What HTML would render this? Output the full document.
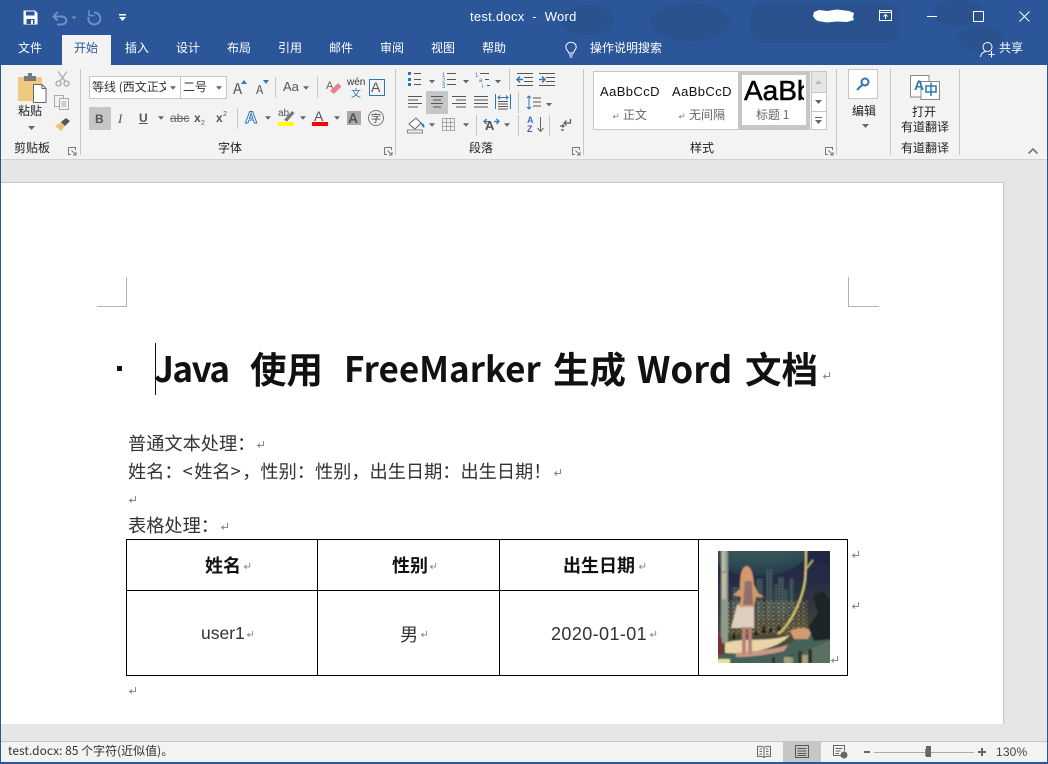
<!DOCTYPE html>
<html lang="zh-CN"><head><meta charset="utf-8"><style>
html,body{margin:0;padding:0;width:1048px;height:764px;overflow:hidden;background:#e6e6e6;font-family:"Liberation Sans","Noto Sans CJK SC",sans-serif}
#a{position:relative;width:1048px;height:764px;overflow:hidden}
.b{position:absolute}
.t{position:absolute;white-space:nowrap;line-height:1;font-family:"Noto Sans CJK SC","Liberation Sans",sans-serif}
.tab{color:#fff;font-size:12px;top:42px}
.r{color:#333;font-size:12px}
.d{color:#333;font-size:18.2px;font-weight:400}
.h{font-size:36.5px;line-height:42px;top:347px;font-weight:700;color:#111}
.l{font-size:35px;line-height:42px;top:347px;font-weight:700;color:#111}
.th{font-size:18px;top:556px;font-weight:700;color:#111}
.sep{position:absolute;width:1px;background:#c6c6c6}
svg{position:absolute;overflow:visible}
.ret{width:9px;height:9px}
</style></head><body><div id="a">
<svg width="0" height="0"><defs>
<symbol id="ret" viewBox="0 0 9 9"><path d="M7.500 1V5.500H2M4 3.500L1.500 5.500L4 7.500" fill="none" stroke="#888" stroke-width="1"/></symbol>
<symbol id="caret" viewBox="0 0 7 4"><path d="M0 0H7L3.500 4Z" fill="#666"/></symbol>
<symbol id="lnch" viewBox="0 0 9 9"><path d="M.5 .5H7.500V3M.5 .5V7.500H3" fill="none" stroke="#777"/><path d="M3.500 3.500L8 8M8 5V8H5" fill="none" stroke="#777"/></symbol>
</defs></svg>

<!-- title + tabs -->
<div class="b" style="left:0;top:0;width:1048px;height:65px;background:#2b579a"></div>
<svg style="left:0;top:0" width="1048" height="52"><g fill="#29528f"><ellipse cx="587" cy="20" rx="26" ry="15"/><rect x="750" y="3" width="150" height="40" rx="14"/><ellipse cx="958" cy="13" rx="26" ry="13"/><ellipse cx="980" cy="39" rx="22" ry="13"/><ellipse cx="690" cy="22" rx="40" ry="19"/></g></svg>
<!-- save -->
<svg style="left:23px;top:10px" width="15" height="15"><path d="M.5 .5H12L14.500 3V14.500H.5Z" fill="#fff"/><rect x="3" y="1.500" width="8.500" height="4" fill="#2b579a"/><rect x="3.500" y="9" width="8" height="5" fill="#2b579a"/><rect x="8" y="10" width="2" height="4" fill="#fff"/></svg>
<!-- undo/redo -->
<svg style="left:52px;top:10px" width="62" height="16" fill="none" stroke="#6f8fbf" stroke-width="2"><path d="M2 6.500H9.500C16 6.500 16 14.500 9.500 14.500H5M5.500 2L1.500 6.500L5.500 10.500"/><path d="M19.500 6.500H24.500L22 9.500Z" fill="#6f8fbf" stroke="none"/><path d="M42 2.500A6 6 0 1 1 36.500 7"/><path d="M37 0V5.500H42.500" stroke-width="1.500"/></svg>
<svg style="left:119px;top:14px" width="7" height="9"><rect x="0" y="0" width="7" height="1.500" fill="#fff"/><path d="M0 3H7L3.500 7Z" fill="#fff"/></svg>
<div class="t" style="left:470px;top:10px;color:#fff;font-size:13px;font-family:'Liberation Sans','Noto Sans CJK SC',sans-serif;letter-spacing:.28px;white-space:pre">test.docx  -  Word</div>
<!-- white blob -->
<svg style="left:813px;top:9px" width="41" height="14"><path d="M1 3L6 1L14 2L24 .5L36 2L41 4L40 8L41 11L34 13L24 12.500L14 13.500L5 12L2 10L0 7Z" fill="#fff"/></svg>
<svg style="left:879px;top:10px" width="13" height="11" fill="none" stroke="#fff"><rect x=".5" y=".5" width="12" height="10"/><path d="M.5 2.500H12.500"/><path d="M6.500 9V4.500M4.500 6.500L6.500 4.500L8.500 6.500"/></svg>
<div class="b" style="left:927px;top:16px;width:10px;height:1px;background:#fff"></div>
<div class="b" style="left:973px;top:11px;width:9px;height:9px;border:1px solid #fff"></div>
<svg style="left:1019px;top:11px" width="11" height="11" stroke="#fff"><path d="M.5 .5L10.500 10.500M10.500 .5L.5 10.500"/></svg>

<div class="b" style="left:62px;top:35px;width:49px;height:30px;background:#f3f3f3"></div>
<div class="t tab" style="left:18px">文件</div>
<div class="t tab" style="left:74px;color:#2b579a">开始</div>
<div class="t tab" style="left:125px">插入</div>
<div class="t tab" style="left:176px">设计</div>
<div class="t tab" style="left:227px">布局</div>
<div class="t tab" style="left:278px">引用</div>
<div class="t tab" style="left:329px">邮件</div>
<div class="t tab" style="left:380px">审阅</div>
<div class="t tab" style="left:431px">视图</div>
<div class="t tab" style="left:482px">帮助</div>
<svg style="left:565px;top:42px" width="12" height="17" fill="none" stroke="#fff"><path d="M3.500 11C3.500 8.500 .8 8 .8 5A5.200 4.700 0 0 1 11.200 5C11.200 8 8.500 8.500 8.500 11Z"/><path d="M4 13H8M4.500 15H7.500"/></svg>
<div class="t tab" style="left:590px">操作说明搜索</div>
<svg style="left:980px;top:42px" width="16" height="17" fill="none" stroke="#fff"><circle cx="7.500" cy="5" r="4.500"/><path d="M.5 15C1 11.500 3.500 9.500 6 9.500M11.500 9V15.500M8.500 12.500H14.500"/></svg>
<div class="t tab" style="left:999px">共享</div>

<!-- ribbon -->
<div class="b" style="left:0;top:65px;width:1048px;height:94px;background:#f3f3f3;border-bottom:1px solid #d2d2d2"></div>
<div class="sep" style="left:80px;top:69px;height:86px"></div>
<div class="sep" style="left:395px;top:69px;height:86px"></div>
<div class="sep" style="left:583px;top:69px;height:86px"></div>
<div class="sep" style="left:836px;top:69px;height:86px"></div>
<div class="sep" style="left:890px;top:69px;height:86px"></div>
<div class="sep" style="left:959px;top:69px;height:86px"></div>

<!-- clipboard -->
<svg style="left:18px;top:73px" width="29" height="30"><rect x="0" y="4" width="24" height="24" rx="1" fill="#f0c981"/><rect x="6" y="3" width="12" height="5" fill="#7a7a7a"/><rect x="10" y="0" width="4" height="4" fill="#7a7a7a"/><path d="M15.500 11.500H24L28 15.500V29.500H15.500Z" fill="#fff" stroke="#666"/><path d="M24 11.500V15.500H28" fill="none" stroke="#666"/></svg>
<div class="t r" style="left:18px;top:105px;color:#222">粘贴</div>
<svg style="left:28px;top:126px" width="7" height="4"><use href="#caret" width="7" height="4"/></svg>
<svg style="left:55px;top:71px" width="15" height="16" fill="none" stroke="#aaa" stroke-width="1.300"><path d="M3 .5L10 10M12 .5L5 10"/><circle cx="3.500" cy="12.500" r="2.500"/><circle cx="11.500" cy="12.500" r="2.500"/></svg>
<svg style="left:54px;top:95px" width="16" height="15" fill="#f3f3f3" stroke="#aaa"><rect x=".5" y=".5" width="9" height="11"/><rect x="5.500" y="3.500" width="9" height="11"/><path d="M7.500 7H12.500M7.500 9H12.500M7.500 11H12.500" /></svg>
<svg style="left:54px;top:117px" width="17" height="16"><path d="M1 9L7 14L11 9L7 5Z" fill="#eec27c"/><path d="M7 5L12 1L16 4L11 9Z" fill="#555"/></svg>
<div class="t r" style="left:14px;top:142px;color:#222">剪贴板</div>
<svg style="left:68px;top:147px" width="9" height="9"><use href="#lnch" width="9" height="9"/></svg>

<!-- font -->
<div class="b" style="left:89px;top:76px;width:90px;height:21px;background:#fff;border:1px solid #c6c6c6"></div>
<div class="b" style="left:180px;top:76px;width:45px;height:21px;background:#fff;border:1px solid #c6c6c6"></div>
<div class="t r" style="left:92px;top:81px;width:74px;overflow:hidden;color:#333">等线 (西文正文)</div>
<svg style="left:170px;top:86px" width="6" height="4"><use href="#caret" width="6" height="4"/></svg>
<div class="t r" style="left:183px;top:81px">二号</div>
<svg style="left:216px;top:86px" width="6" height="4"><use href="#caret" width="6" height="4"/></svg>
<div class="t" style="left:233px;top:81px;font-size:15px;color:#555">A</div>
<svg style="left:241px;top:80px" width="6" height="4"><path d="M0 4L3 0L6 4Z" fill="#2f76b5"/></svg>
<div class="t" style="left:256px;top:84px;font-size:12px;color:#555">A</div>
<svg style="left:263px;top:80px" width="6" height="4"><path d="M0 0L3 4L6 0Z" fill="#2f76b5"/></svg>
<div class="sep" style="left:275px;top:77px;height:21px"></div>
<div class="t" style="left:283px;top:80px;font-size:13px;color:#555;font-family:'Liberation Sans'">Aa</div>
<svg style="left:303px;top:86px" width="6" height="4"><use href="#caret" width="6" height="4"/></svg>
<div class="sep" style="left:317px;top:77px;height:21px"></div>
<svg style="left:326px;top:78px" width="16" height="17"><text x="0" y="11" font-size="11" fill="#666" font-family="Liberation Sans">A</text><path d="M4 13L12 5L15.500 8.500L8 16Z" fill="#e8838e"/></svg>
<div class="t" style="left:347px;top:78px;font-size:10px;color:#333;font-family:'Liberation Sans'">wén</div>
<div class="t" style="left:351px;top:88px;font-size:10px;color:#2f76b5">文</div>
<div class="b" style="left:369px;top:79px;width:14px;height:15px;border:1px solid #2f76b5"></div>
<div class="t" style="left:371px;top:80px;font-size:14px;color:#555;font-family:'Liberation Sans'">A</div>

<div class="b" style="left:89px;top:107px;width:22px;height:23px;background:#c6c6c6"></div>
<div class="t" style="left:95px;top:113px;font-size:12px;font-weight:700;color:#555;font-family:'Liberation Sans'">B</div>
<div class="t" style="left:118px;top:112px;font-size:13px;font-style:italic;color:#555;font-family:'Liberation Serif'">I</div>
<div class="t" style="left:139px;top:112px;font-size:12px;color:#555;font-weight:700;font-family:'Liberation Sans';text-decoration:underline">U</div>
<svg style="left:158px;top:116px" width="6" height="4"><use href="#caret" width="6" height="4"/></svg>
<div class="t" style="left:170px;top:112px;font-size:12px;color:#666;font-family:'Liberation Sans';text-decoration:line-through">abc</div>
<div class="t" style="left:194px;top:112px;font-size:12px;font-weight:700;color:#555;font-family:'Liberation Sans'">x</div>
<div class="t" style="left:201px;top:120px;font-size:7px;color:#2f76b5;font-family:'Liberation Sans'">2</div>
<div class="t" style="left:216px;top:112px;font-size:12px;font-weight:700;color:#555;font-family:'Liberation Sans'">x</div>
<div class="t" style="left:223px;top:111px;font-size:7px;color:#555;font-family:'Liberation Sans'">2</div>
<div class="sep" style="left:237px;top:108px;height:21px"></div>
<div class="t" style="left:245px;top:109px;font-size:17px;font-weight:700;color:#fff;-webkit-text-stroke:1px #2f76b5;font-family:'Liberation Sans'">A</div>
<svg style="left:265px;top:116px" width="6" height="4"><use href="#caret" width="6" height="4"/></svg>
<div class="t" style="left:278px;top:109px;font-size:10px;color:#555;font-family:'Liberation Sans'">ab</div>
<svg style="left:283px;top:110px" width="12" height="12"><path d="M1 10L9 1L11.500 3L4 11.500Z" fill="#777"/></svg>
<div class="b" style="left:278px;top:122px;width:16px;height:4px;background:#ff0"></div>
<svg style="left:300px;top:116px" width="6" height="4"><use href="#caret" width="6" height="4"/></svg>
<div class="t" style="left:314px;top:109px;font-size:14px;color:#555;font-family:'Liberation Sans'">A</div>
<div class="b" style="left:312px;top:122px;width:16px;height:4px;background:#f00"></div>
<svg style="left:334px;top:116px" width="6" height="4"><use href="#caret" width="6" height="4"/></svg>
<div class="b" style="left:347px;top:111px;width:14px;height:14px;background:#a9a9a9"></div>
<div class="t" style="left:348px;top:111px;font-size:14px;font-weight:700;color:#555;font-family:'Liberation Sans'">A</div>
<div class="b" style="left:368px;top:110px;width:14px;height:14px;border:1px solid #777;border-radius:50%"></div>
<div class="t" style="left:371px;top:113px;font-size:10px;color:#444">字</div>
<div class="t r" style="left:218px;top:142px;color:#222">字体</div>
<svg style="left:384px;top:147px" width="9" height="9"><use href="#lnch" width="9" height="9"/></svg>

<!-- paragraph -->
<svg style="left:408px;top:71px" width="155" height="18" fill="none" stroke="#555">
<path d="M6 2.500H13M6 8.500H13M6 13.500H13"/><g fill="#2f76b5" stroke="none"><rect x="0" y="1" width="3" height="3"/><rect x="0" y="7" width="3" height="3"/><rect x="0" y="12" width="3" height="3"/></g>
<path d="M21 9H27L24 12.500Z" fill="#666" stroke="none"/>
<path d="M39 2.500H48M39 8.500H48M39 13.500H48"/><g font-size="6" fill="#2f76b5" stroke="none" font-family="Liberation Sans"><text x="34" y="6">1</text><text x="34" y="11.500">2</text><text x="34" y="17">3</text></g>
<path d="M55 9H61L58 12.500Z" fill="#666" stroke="none"/>
<path d="M72 2.500H81M77 8.500H81M79 14.500H82"/><g font-size="6" fill="#2f76b5" stroke="none" font-family="Liberation Sans"><text x="67" y="6">1</text><text x="71" y="11">a</text><text x="74" y="17">i</text></g>
<path d="M87 9H93L90 12.500Z" fill="#666" stroke="none"/>
<path d="M109 2.500H125M116 6.500H125M116 10.500H125M109 14.500H125"/><path d="M115 8.500H109M112 5.500L109 8.500L112 11.500" stroke="#2f76b5" stroke-width="1.500"/>
<path d="M131 2.500H147M138 6.500H147M138 10.500H147M131 14.500H147"/><path d="M131 8.500H137M134 5.500L137 8.500L134 11.500" stroke="#2f76b5" stroke-width="1.500"/>
</svg>
<div class="sep" style="left:509px;top:69px;height:21px"></div>
<div class="b" style="left:426px;top:91px;width:22px;height:23px;background:#c6c6c6"></div>
<svg style="left:408px;top:95px" width="150" height="16" fill="none" stroke="#555">
<path d="M0 1.500H14M0 5H10M0 8.500H14M0 12H10"/><path d="M23 1.500H35M25 5H33M23 8.500H35M25 12H33"/><path d="M44 1.500H58M48 5H58M44 8.500H58M48 12H58"/><path d="M66 1.500H80M66 5H80M66 8.500H80M66 12H80"/>
<path d="M87.500 -1V14M102.500 -1V14" stroke="#2f76b5"/><path d="M90 6.500H100M90 9H100M90 11.500H100M90 14H100"/><path d="M90 2.500H100M92 .5L90 2.500L92 4.500M98 .5L100 2.500L98 4.500" stroke="#2f76b5"/>
<path d="M125 3H133M125 7H133M125 11H133"/><path d="M121 1V14M119 3L121 1L123 3M119 12L121 14L123 12" stroke="#2f76b5"/>
<path d="M138 8H144L141 11.500Z" fill="#666" stroke="none"/>
</svg>
<div class="sep" style="left:518px;top:92px;height:21px"></div>
<svg style="left:407px;top:116px" width="20" height="18"><path d="M2 8L9 2L14 7L8 13Z" fill="#fff" stroke="#666"/><path d="M14 7C17 7 18 10 17 12C15 10 14 9 14 7Z" fill="#2f76b5"/><rect x=".5" y="14" width="15" height="3" fill="#f3f3f3" stroke="#888"/></svg>
<svg style="left:429px;top:123px" width="6" height="4"><use href="#caret" width="6" height="4"/></svg>
<svg style="left:442px;top:118px" width="13" height="13" fill="none" stroke="#666" stroke-dasharray="1 1"><rect x=".5" y=".5" width="12" height="12"/><path d="M.5 4.500H12.500M.5 8.500H12.500M4.500 .5V12.500M8.500 .5V12.500"/></svg>
<svg style="left:463px;top:123px" width="6" height="4"><use href="#caret" width="6" height="4"/></svg>
<div class="sep" style="left:476px;top:115px;height:21px"></div>
<div class="t" style="left:485px;top:119px;font-size:13px;font-weight:700;color:#555;font-family:'Liberation Sans'">A</div>
<svg style="left:484px;top:118px" width="16" height="7" fill="none" stroke="#2f76b5" stroke-width="1.300"><path d="M0 3.500H5M2.500 1L0 3.500L2.500 6M15 3.500H10M12.500 1L15 3.500L12.500 6"/></svg>
<svg style="left:504px;top:123px" width="6" height="4"><use href="#caret" width="6" height="4"/></svg>
<div class="sep" style="left:518px;top:115px;height:21px"></div>
<div class="t" style="left:527px;top:116px;font-size:9px;font-weight:700;color:#2f76b5;font-family:'Liberation Sans'">A</div>
<div class="t" style="left:527px;top:125px;font-size:9px;font-weight:700;color:#7b4aa6;font-family:'Liberation Sans'">Z</div>
<svg style="left:537px;top:117px" width="7" height="16" fill="none" stroke="#666"><path d="M3.500 0V14M.5 11L3.500 14.500L6.500 11"/></svg>
<div class="sep" style="left:549px;top:115px;height:21px"></div>
<svg style="left:559px;top:118px" width="13" height="13" fill="none" stroke="#555" stroke-width="1.200"><path d="M11.500 1V5H5M7.500 2.500L5 5L7.500 7.500"/><path d="M1 8H5M3.500 6.500L5 8L3.500 9.500M2 12H5"/></svg>
<div class="t r" style="left:469px;top:142px;color:#222">段落</div>
<svg style="left:572px;top:147px" width="9" height="9"><use href="#lnch" width="9" height="9"/></svg>

<!-- styles -->
<div class="b" style="left:593px;top:71px;width:215px;height:57px;background:#fff;border:1px solid #c6c6c6"></div>
<div class="t" style="left:600px;top:85px;width:60px;overflow:hidden;font-size:13px;letter-spacing:.4px;color:#111;font-family:'Liberation Sans'">AaBbCcDd</div>
<div class="t" style="left:672px;top:85px;width:59px;overflow:hidden;font-size:13px;letter-spacing:.4px;color:#111;font-family:'Liberation Sans'">AaBbCcDd</div>
<svg style="left:612px;top:112px" width="7" height="8"><use href="#ret" width="7" height="8"/></svg>
<div class="t r" style="left:623px;top:109px;color:#666">正文</div>
<svg style="left:678px;top:112px" width="7" height="8"><use href="#ret" width="7" height="8"/></svg>
<div class="t r" style="left:689px;top:109px;color:#666">无间隔</div>
<div class="b" style="left:738px;top:71px;width:64px;height:50px;border:4px solid #c6c6c6;background:#fff"></div>
<div class="t" style="left:744px;top:76px;width:60px;overflow:hidden;font-size:28px;color:#000;font-family:'Liberation Sans',sans-serif;line-height:30px;-webkit-text-stroke:.5px #000">AaBbC</div>
<div class="t r" style="left:756px;top:109px;color:#666;font-size:12px">标题 1</div>
<div class="b" style="left:811px;top:71px;width:14px;height:57px;background:#fff;border:1px solid #c6c6c6"></div>
<div class="b" style="left:812px;top:72px;width:14px;height:20px;background:#e6e6e6"></div>
<div class="b" style="left:811px;top:92px;width:15px;height:1px;background:#c6c6c6"></div>
<div class="b" style="left:811px;top:111px;width:15px;height:1px;background:#c6c6c6"></div>
<svg style="left:815px;top:80px" width="7" height="4"><path d="M0 4L3.500 0L7 4Z" fill="#bbb"/></svg>
<svg style="left:815px;top:100px" width="7" height="4"><use href="#caret" width="7" height="4"/></svg>
<svg style="left:815px;top:117px" width="7" height="7"><rect width="7" height="1" fill="#666"/><path d="M0 3H7L3.500 7Z" fill="#666"/></svg>
<div class="t r" style="left:690px;top:142px;color:#222">样式</div>
<svg style="left:825px;top:147px" width="9" height="9"><use href="#lnch" width="9" height="9"/></svg>

<!-- edit -->
<div class="b" style="left:848px;top:69px;width:28px;height:28px;background:#fff;border:1px solid #c6c6c6"></div>
<svg style="left:856px;top:77px" width="14" height="14" fill="none" stroke="#2f76b5" stroke-width="2"><circle cx="9" cy="5" r="3.500"/><path d="M6 8L1 13"/></svg>
<div class="t r" style="left:852px;top:105px;color:#222">编辑</div>
<svg style="left:862px;top:124px" width="7" height="4"><use href="#caret" width="7" height="4"/></svg>

<!-- youdao -->
<svg style="left:910px;top:75px" width="31" height="26"><path d="M.5 .5H19V22H.5Z" fill="#fff" stroke="#888"/><path d="M11 6.500H29.500V24.500H11Z" fill="#fff" stroke="#888"/><text x="4" y="15" font-size="14" font-weight="700" fill="#2f76b5" font-family="Liberation Sans">A</text><path d="M16 11H26V17H16ZM21 7.500V21" fill="none" stroke="#2f76b5" stroke-width="1.500"/></svg>
<div class="t r" style="left:912px;top:106px;color:#222">打开</div>
<div class="t r" style="left:901px;top:121px;color:#222">有道翻译</div>
<div class="t r" style="left:901px;top:142px;color:#222">有道翻译</div>
<svg style="left:1028px;top:148px" width="10" height="6" fill="none" stroke="#777" stroke-width="1.600"><path d="M.5 5.500L5 1L9.500 5.500"/></svg>

<!-- doc -->
<div class="b" style="left:1px;top:160px;width:1046px;height:581px;background:#e6e6e6"></div>
<div class="b" style="left:1px;top:182px;width:1002px;height:541px;background:#fff;border-top:1px solid #c6c6c6;border-right:1px solid #c6c6c6"></div>
<div class="b" style="left:97px;top:306px;width:30px;height:1px;background:#b4b4b4"></div>
<div class="b" style="left:126px;top:277px;width:1px;height:30px;background:#b4b4b4"></div>
<div class="b" style="left:848px;top:306px;width:31px;height:1px;background:#b4b4b4"></div>
<div class="b" style="left:848px;top:277px;width:1px;height:30px;background:#b4b4b4"></div>
<div class="b" style="left:117px;top:366px;width:5px;height:5px;background:#111"></div>
<div class="t l" style="left:154px;letter-spacing:-1.500px">Java</div>
<div class="t h" style="left:250px">使用</div>
<div class="t l" style="left:344px">FreeMarker</div>
<div class="t h" style="left:553px">生成</div>
<div class="t h" style="left:637px;letter-spacing:0">Word</div>
<div class="t h" style="left:745px">文档</div>
<div class="b" style="left:155px;top:343px;width:1px;height:52px;background:#111"></div>
<svg class="ret" style="left:822px;top:371px"><use href="#ret" width="9" height="9"/></svg>

<div class="t d" style="left:128px;top:434px">普通文本处理：</div>
<svg class="ret" style="left:256px;top:440px"><use href="#ret" width="9" height="9"/></svg>
<div class="t d" style="left:128px;top:462px">姓名：<span style="letter-spacing:1.500px">&lt;</span>姓名<span style="letter-spacing:1.500px">&gt;</span>，性别：性别，出生日期：出生日期！</div>
<svg class="ret" style="left:553px;top:468px"><use href="#ret" width="9" height="9"/></svg>
<svg class="ret" style="left:128px;top:495px"><use href="#ret" width="9" height="9"/></svg>
<div class="t d" style="left:128px;top:516px">表格处理：</div>
<svg class="ret" style="left:220px;top:522px"><use href="#ret" width="9" height="9"/></svg>

<!-- table -->
<div class="b" style="left:126px;top:539px;width:722px;height:137px;border:1px solid #000;box-sizing:border-box"></div>
<div class="b" style="left:317px;top:539px;width:1px;height:137px;background:#000"></div>
<div class="b" style="left:499px;top:539px;width:1px;height:137px;background:#000"></div>
<div class="b" style="left:698px;top:539px;width:1px;height:137px;background:#000"></div>
<div class="b" style="left:126px;top:590px;width:573px;height:1px;background:#000"></div>

<div class="t th" style="left:205px">姓名</div>
<svg style="left:243px;top:562px" width="8" height="8"><use href="#ret" width="8" height="8"/></svg>
<div class="t th" style="left:392px">性别</div>
<svg style="left:429px;top:562px" width="8" height="8"><use href="#ret" width="8" height="8"/></svg>
<div class="t th" style="left:563px">出生日期</div>
<svg style="left:638px;top:562px" width="8" height="8"><use href="#ret" width="8" height="8"/></svg>
<div class="t d" style="left:201px;top:625px;font-size:17.500px;font-family:'Liberation Sans'">user1</div>
<svg style="left:246px;top:630px" width="8" height="8"><use href="#ret" width="8" height="8"/></svg>
<div class="t d" style="left:400px;top:625px">男</div>
<svg style="left:420px;top:630px" width="8" height="8"><use href="#ret" width="8" height="8"/></svg>
<div class="t d" style="left:551px;top:625px;font-size:18px;letter-spacing:.4px;font-family:'Liberation Sans'">2020-01-01</div>
<svg style="left:649px;top:630px" width="8" height="8"><use href="#ret" width="8" height="8"/></svg>
<svg style="left:851px;top:550px" width="9" height="9"><use href="#ret" width="9" height="9"/></svg>
<svg style="left:851px;top:601px" width="9" height="9"><use href="#ret" width="9" height="9"/></svg>
<svg style="left:830px;top:655px" width="9" height="9"><use href="#ret" width="9" height="9"/></svg>
<svg style="left:128px;top:686px" width="9" height="9"><use href="#ret" width="9" height="9"/></svg>

<!-- picture -->
<svg style="left:718px;top:551px;overflow:hidden" width="112" height="112" viewBox="0 0 112 112">
<defs>
<filter id="soft" x="-5%" y="-5%" width="110%" height="110%"><feGaussianBlur stdDeviation=".7"/></filter>
<linearGradient id="sky" x1="0" y1="0" x2="0" y2="1"><stop offset="0" stop-color="#1f2444"/><stop offset=".28" stop-color="#262c46"/><stop offset=".5" stop-color="#33363e"/><stop offset=".72" stop-color="#4f4a38"/><stop offset="1" stop-color="#3a4439"/></linearGradient>
<radialGradient id="moon" cx=".5" cy="0" r="1"><stop offset="0" stop-color="#567069"/><stop offset=".75" stop-color="#2f4e54"/><stop offset="1" stop-color="#27394c"/></radialGradient>
<pattern id="lights" width="5" height="4" patternUnits="userSpaceOnUse"><rect x="0" y="0" width="1.500" height="1" fill="#e0c878"/><rect x="3" y="2" width="1" height="1" fill="#b9a566"/></pattern>
<pattern id="win" width="3" height="3" patternUnits="userSpaceOnUse"><rect width="3" height="3" fill="#33464f"/><rect x="1" y="1" width="1" height="1" fill="#6e8782"/></pattern>
</defs>
<rect width="112" height="112" fill="#1f2444"/>
<g filter="url(#soft)">
<rect x="-4" y="-4" width="120" height="120" fill="url(#sky)"/>
<ellipse cx="40" cy="-2" rx="50" ry="27" fill="url(#moon)"/>
<g fill="url(#win)"><rect x="48" y="18" width="7" height="50"/><rect x="38" y="28" width="6" height="40"/><rect x="60" y="26" width="6" height="42"/><rect x="71" y="28" width="5" height="32"/><rect x="14" y="36" width="6" height="30"/><rect x="66" y="38" width="4" height="26"/><rect x="56" y="34" width="3" height="30"/></g>
<rect x="10" y="50" width="80" height="34" fill="url(#lights)" opacity=".85"/>
<rect x="3" y="-4" width="7" height="96" fill="#8d9b8d"/><rect x="4" y="0" width="3" height="20" fill="#b9c0a8"/><rect x="4" y="22" width="4" height="26" fill="#c5b9a5"/>
<path d="M-2 80L4 88V114H-2Z" fill="#7a2e36"/>
<path d="M92 76C114 78 114 114 114 114H-2V104C20 102 42 104 60 96C74 92 84 86 92 76Z" fill="#45625a"/>
<path d="M7 92C24 86 50 92 72 84C60 98 30 104 7 102Z" fill="#ead5a8"/>
<path d="M18 102C30 100 50 100 70 94L66 100C50 104 30 106 18 106Z" fill="#c99a86"/>
<path d="M60 83C72 74 84 50 87 30C88 18 88 8 88 -2" fill="none" stroke="#d6c96e" stroke-width="2"/>
<path d="M88 18L95 9" stroke="#c0b878" stroke-width="1.500"/>
<path d="M72 80C78 76 92 76 94 80L90 88H76Z" fill="#d19a73"/>
<path d="M90 76L100 62L95 45L104 40L114 50V88L96 90Z" fill="#1a2828"/>
<path d="M88 100L114 88V114H92Z" fill="#5a6f60"/>
<path d="M19 54L36 54L36 77H13Z" fill="#dccfc0"/>
<path d="M28 15C33 15 35 22 36 34L40 42L46 46L38 46L36 56H21L23 46L15 44L22 38C22 26 23 17 28 15Z" fill="#d49a6e"/>
<path d="M27 30H34L35 54H25Z" fill="#8f6f68"/>
<path d="M24 76H28V103H24ZM30 76H34V103H30Z" fill="#b88274"/>
<path d="M-2 108H12V114H-2Z" fill="#e6e39a"/>
<path d="M43 82L46 74L48 82ZM50 82L53 76L55 82ZM58 80L61 74L63 80ZM14 88L16 80L18 88ZM36 84L38 78L40 84Z" fill="#12181f"/>
<path d="M80 100H84V114H80ZM90 98H94V114H90ZM72 104H75V114H72ZM54 106H57V114H54Z" fill="#33332c"/>
<path d="M66 106H75V114H66ZM84 104H90V114H84Z" fill="#c9c08a" opacity=".7"/>
</g>
</svg>

<!-- status bar -->
<div class="b" style="left:1px;top:741px;width:1046px;height:21px;background:#f3f3f3;border-top:1px solid #c6c6c6;box-sizing:border-box"></div>
<div class="t" style="left:8px;top:745px;font-size:12px;color:#333">test.docx: 85 个字符(近似值)。</div>
<svg style="left:757px;top:745px" width="14" height="13" fill="none" stroke="#666"><path d="M7 2.500C5 1 3 1 .5 1.500V11.500C3 11 5 11 7 12.500C9 11 11 11 13.500 11.500V1.500C11 1 9 1 7 2.500V12.500"/><path d="M2.500 4H5M2.500 6.500H5M2.500 9H5M9 4H11.500M9 6.500H11.500M9 9H11.500"/></svg>
<div class="b" style="left:783px;top:742px;width:38px;height:20px;background:#c6c6c6"></div>
<svg style="left:795px;top:745px" width="14" height="13" fill="none" stroke="#555"><rect x=".5" y=".5" width="13" height="12"/><path d="M2.500 3.500H11.500M2.500 6H11.500M2.500 8.500H11.500M2.500 10.500H11.500"/></svg>
<svg style="left:833px;top:745px" width="15" height="14" fill="none" stroke="#666"><path d="M9 10.500H.5V.5H11.500V6M2.500 3.500H9.500M2.500 6H7.500M2.500 8.500H6"/><circle cx="11" cy="10" r="3.500" fill="#666" stroke="none"/></svg>
<div class="b" style="left:864px;top:751px;width:6px;height:2px;background:#666"></div>
<div class="b" style="left:874px;top:752px;width:100px;height:1px;background:#aaa"></div>
<div class="b" style="left:925px;top:749px;width:1px;height:7px;background:#888"></div>
<div class="b" style="left:926px;top:746px;width:5px;height:11px;background:#666"></div>
<svg style="left:978px;top:748px" width="8" height="8" fill="#666"><path d="M3 0H5V3H8V5H5V8H3V5H0V3H3Z"/></svg>
<div class="t" style="left:996px;top:746px;font-size:12px;letter-spacing:.15px;color:#444;font-family:'Liberation Sans'">130%</div>

<!-- window frame -->
<div class="b" style="left:0;top:0;width:1px;height:764px;background:#2b579a"></div>
<div class="b" style="left:1047px;top:0;width:1px;height:764px;background:#2b579a"></div>
<div class="b" style="left:0;top:762px;width:1048px;height:2px;background:#2b579a"></div>
</div></body></html>
